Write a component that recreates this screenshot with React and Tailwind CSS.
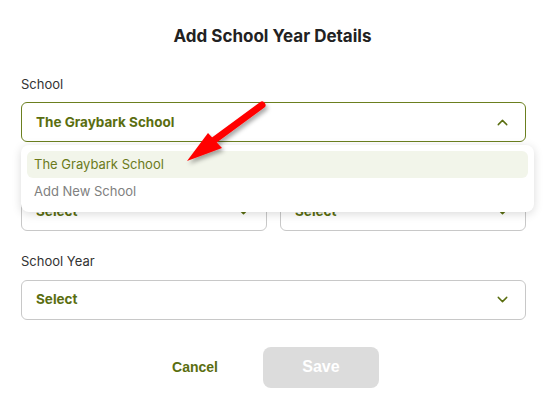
import { ChevronDown, ChevronUp } from "lucide-react";

const fieldBox =
  "flex h-10 items-center justify-between rounded-md border bg-white pl-[14px] pr-[14px] text-[13.5px] font-bold text-[#5a6e10]";

const Select = ({ value, open, className = "" }) => (
  <div
    className={`${fieldBox} ${open ? "border-[#6b7f1f]" : "border-[#c8c8c8]"} ${className}`}
  >
    <span>{value}</span>
    {open ? (
      <ChevronUp size={17} strokeWidth={2} className="text-[#5a6e10]" />
    ) : (
      <ChevronDown size={17} strokeWidth={2} className="text-[#5a6e10]" />
    )}
  </div>
);

const Arrow = () => (
  <svg
    className="pointer-events-none absolute left-[180px] top-[96px] z-20"
    width="95"
    height="75"
    viewBox="0 0 95 75"
  >
    <defs>
      <filter id="sh" x="-20%" y="-20%" width="150%" height="150%">
        <feDropShadow dx="2" dy="3" stdDeviation="2" floodColor="#000" floodOpacity="0.35" />
      </filter>
    </defs>
    <g filter="url(#sh)">
      <line x1="82" y1="9" x2="33" y2="45" stroke="#ff0000" strokeWidth="7" strokeLinecap="round" />
      <polygon points="7,65 28,37 42,52" fill="#ff0000" />
    </g>
  </svg>
);

export default function App() {
  return (
    <div
      className="relative h-[411px] w-[545px] overflow-hidden bg-white text-[#333]"
      style={{ fontFamily: "Inter, 'Liberation Sans', sans-serif" }}
    >
      <div className="px-[21px] pt-[24px]">
        <h2 className="text-center text-[17px] font-bold text-[#222]">
          Add School Year Details
        </h2>

        <div className="mt-[25px]">
          <label className="block text-[13px] text-[#333]">School</label>
          <div className="relative mt-[8px] w-[505px]">
            <Select value="The Graybark School" open />
            <div className="absolute left-0 top-[43px] z-10 w-[513px] rounded-lg bg-white p-[6px] shadow-[0_2px_10px_rgba(0,0,0,0.15)]">
              <div className="flex h-[27px] items-center rounded-md bg-[#f2f5ea] px-[7px] text-[13px] text-[#6b7a1a]">
                The Graybark School
              </div>
              <div className="flex h-[28px] items-center px-[7px] text-[13px] text-[#808080]">
                Add New School
              </div>
            </div>
          </div>
        </div>

        {/* grade / term row, labels hidden behind the open menu */}
        <div className="mt-[49px] grid w-[505px] grid-cols-2 gap-[13px]">
          <Select value="Select" />
          <Select value="Select" />
        </div>

        <div className="mt-[21px] w-[505px]">
          <label className="block text-[13px]">School Year</label>
          <Select value="Select" className="mt-[8px]" />
        </div>

        <div className="mt-[27px] flex items-center justify-center gap-[45px] pl-[6px]">
          <button
            className="text-[14px] font-bold text-[#5a6e10]"
            style={{ fontFamily: "'Liberation Sans', Arial, sans-serif" }}
          >
            Cancel
          </button>
          <button
            className="h-[41px] w-[116px] rounded-lg bg-[#dcdcdc] text-[16px] font-bold text-white"
            style={{ fontFamily: "'Liberation Sans', Arial, sans-serif" }}
          >
            Save
          </button>
        </div>
      </div>
      <Arrow />
    </div>
  );
}
